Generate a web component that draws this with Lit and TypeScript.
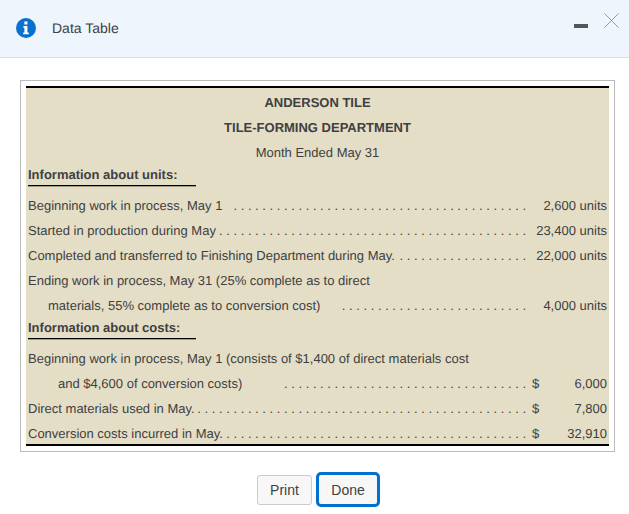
import { LitElement, html, css } from 'lit';
import { customElement } from 'lit/decorators.js';

interface Row {
  label: string;
  dots?: number;
  indent?: number;
  sign?: string;
  value?: string;
}

const unitRows: Row[] = [
  { label: 'Beginning work in process, May 1', dots: 41, value: '2,600 units' },
  { label: 'Started in production during May', dots: 43, value: '23,400 units' },
  { label: 'Completed and transferred to Finishing Department during May.', dots: 18, value: '22,000 units' },
  { label: 'Ending work in process, May 31 (25% complete as to direct' },
  { label: 'materials, 55% complete as to conversion cost)', indent: 20, dots: 26, value: '4,000 units' },
];

const costRows: Row[] = [
  { label: 'Beginning work in process, May 1 (consists of $1,400 of direct materials cost' },
  { label: 'and $4,600 of conversion costs)', indent: 30, dots: 34, sign: '$', value: '6,000' },
  { label: 'Direct materials used in May.', dots: 46, sign: '$', value: '7,800' },
  { label: 'Conversion costs incurred in May.', dots: 42, sign: '$', value: '32,910' },
];

@customElement('app-root')
export class AppRoot extends LitElement {
  static styles = css`
    :host {
      display: block;
      height: 514px;
      background: #fff;
      color: #404040;
      font-family: 'Liberation Sans', Arial, sans-serif;
      font-size: 13px;
      text-rendering: geometricPrecision;
    }
    .header {
      height: 58px;
      box-sizing: border-box;
      background: #eef5fd;
      border-bottom: 1px solid #cfe0ee;
      display: flex;
      align-items: center;
      padding: 0 10px 1px 16px;
    }
    .title {
      margin-left: 16px;
      font-size: 14px;
      flex: 1;
    }
    .minimize {
      width: 14px;
      height: 4px;
      background: #555;
      margin: 0 16px 4px 0;
    }
    .icon {
      display: block;
    }
    .close {
      margin-bottom: 15px;
    }
    .box {
      margin: 22px 14px 0 20px;
      border: 1px solid #bbb;
      padding: 5px;
    }
    .sheet {
      background: #e4dec7;
      border-top: 2px solid #000;
      border-bottom: 2px solid #000;
      padding-top: 2px;
      height: 354px;
      overflow: hidden;
    }
    .center {
      height: 25px;
      line-height: 25px;
      text-align: center;
    }
    .center.bold {
      font-weight: bold;
    }
    .heading {
      width: 168px;
      margin-left: 2px;
      height: 20px;
      line-height: 20px;
      font-weight: bold;
      border-bottom: 1px solid #000;
      box-shadow: 0 1px 0 rgba(0, 0, 0, 0.3);
      white-space: nowrap;
    }
    .rows {
      padding-top: 7px;
    }
    .row {
      display: flex;
      height: 25px;
      line-height: 25px;
      padding: 0 2px;
      white-space: nowrap;
    }
    .dots {
      flex: 1;
      width: 0;
      text-align: right;
      overflow: hidden;
    }
    .sign {
      width: 8px;
      margin-left: 6px;
    }
    .value {
      width: 81px;
      text-align: right;
    }
    .value.wide {
      width: 67px;
    }
    .actions {
      display: flex;
      justify-content: center;
      align-items: center;
      gap: 4px;
      margin-top: 20px;
      padding-left: 8px;
    }
    button {
      font: 14px 'Liberation Sans', Arial, sans-serif;
      color: #404040;
      background: #f7f7f7;
      border: 1px solid #ccc;
      border-radius: 3px;
      height: 30px;
      width: 55px;
      padding: 0;
    }
    button.primary {
      width: 64px;
      height: 35px;
      border: 3px solid #0071ce;
      border-radius: 5px;
    }
  `;

  private _renderRow(row: Row) {
    const hasDollar = row.sign !== undefined;
    return html`
      <div class="row">
        <span style=${row.indent ? `margin-left:${row.indent}px` : ''}>${row.label}</span>
        ${row.value
          ? html`
              <span class="dots">${Array(row.dots).fill('.').join(' ')}</span>
              ${hasDollar ? html`<span class="sign">${row.sign}</span>` : ''}
              <span class="value ${hasDollar ? 'wide' : ''}">${row.value}</span>
            `
          : ''}
      </div>
    `;
  }

  render() {
    return html`
      <div class="header">
        <svg class="icon" width="20" height="20" viewBox="0 0 20 20">
          <circle cx="10" cy="10" r="10" fill="#0a70cf" />
          <path d="M8.4 3.6h3v2.8h-3zM7.4 8h4v6.4h1.4v1.8H7.2v-1.8h1.2V9.8h-1z" fill="#fff" />
        </svg>
        <div class="title">Data Table</div>
        <div class="minimize"></div>
        <svg class="icon close" width="15" height="15" viewBox="0 0 15 15">
          <path d="M0.5 0.5L14.5 14.5M14.5 0.5L0.5 14.5" stroke="#999" stroke-width="1" fill="none" />
        </svg>
      </div>
      <div class="box">
        <div class="sheet">
          <div class="center bold">ANDERSON TILE</div>
          <div class="center bold">TILE-FORMING DEPARTMENT</div>
          <div class="center">Month Ended May 31</div>
          <div class="heading">Information about units:</div>
          <div class="rows">${unitRows.map((r) => this._renderRow(r))}</div>
          <div class="heading">Information about costs:</div>
          <div class="rows">${costRows.map((r) => this._renderRow(r))}</div>
        </div>
      </div>
      <div class="actions">
        <button>Print</button>
        <button class="primary">Done</button>
      </div>
    `;
  }
}

declare global {
  interface HTMLElementTagNameMap {
    'app-root': AppRoot;
  }
}
